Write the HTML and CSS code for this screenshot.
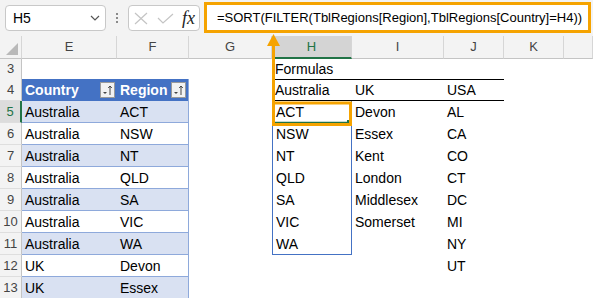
FILE: index.html
```html
<html>
  <head>
    <title>Spill range</title>
    <meta charset="utf-8" />
    <link rel="stylesheet" href="styles.css">
  </head>
  <body>

    <!-- 编辑栏 -->
    <div class="toolbar">
      <div class="namebox">
        <span>H5</span>
        <svg width="10" height="6" viewBox="0 0 10 6"><path d="M1 1 L5 5 L9 1" fill="none" stroke="#555" stroke-width="1.2"/></svg>
      </div>
      <div class="dots"><span></span><span></span><span></span></div>
      <div class="fxbox">
        <svg width="14" height="13" viewBox="0 0 14 13"><path d="M1 1 L13 12 M13 1 L1 12" stroke="#c4c4c4" stroke-width="1.2" fill="none"/></svg>
        <svg width="17" height="11" viewBox="0 0 17 11"><path d="M1 5 L6 10 L16 1" stroke="#c4c4c4" stroke-width="1.2" fill="none"/></svg>
        <span class="fx">fx</span>
      </div>
      <div class="formula">=SORT(FILTER(TblRegions[Region],TblRegions[Country]=H4))</div>
    </div>

    <!-- 工作表 -->
    <div class="sheet">
      <div class="row hdr">
        <div class="corner"><span class="tri"></span></div>
        <div>E</div><div>F</div><div>G</div><div class="on">H</div><div>I</div><div>J</div><div>K</div><div></div>
      </div>

      <div class="row r3">
        <div class="rh">3</div>
        <div></div><div></div><div></div>
        <div class="cell line">Formulas</div><div class="cell line"></div><div class="cell line"></div><div></div><div></div>
      </div>

      <div class="row">
        <div class="rh">4</div>
        <div class="cell th">Country<span class="fbtn"><svg width="13" height="14" viewBox="0 0 13 14"><path d="M2 9 L6 9 L4 11 Z" fill="#444"/><path d="M9 3 L9 12 M7.2 5 L9 3 L10.8 5" stroke="#444" stroke-width="1" fill="none"/></svg></span></div>
        <div class="cell th f">Region<span class="fbtn"><svg width="13" height="14" viewBox="0 0 13 14"><path d="M2 9 L6 9 L4 11 Z" fill="#444"/><path d="M9 3 L9 12 M7.2 5 L9 3 L10.8 5" stroke="#444" stroke-width="1" fill="none"/></svg></span></div>
        <div></div>
        <div class="cell line">Australia</div><div class="cell line">UK</div><div class="cell line">USA</div><div></div><div></div>
      </div>

      <div class="row">
        <div class="rh on">5</div>
        <div class="cell t band">Australia</div><div class="cell t f band">ACT</div><div></div>
        <div class="cell sp">ACT</div><div class="cell">Devon</div><div class="cell">AL</div><div></div><div></div>
      </div>

      <div class="row">
        <div class="rh">6</div>
        <div class="cell t">Australia</div><div class="cell t f">NSW</div><div></div>
        <div class="cell sp">NSW</div><div class="cell">Essex</div><div class="cell">CA</div><div></div><div></div>
      </div>

      <div class="row">
        <div class="rh">7</div>
        <div class="cell t band">Australia</div><div class="cell t f band">NT</div><div></div>
        <div class="cell sp">NT</div><div class="cell">Kent</div><div class="cell">CO</div><div></div><div></div>
      </div>

      <div class="row">
        <div class="rh">8</div>
        <div class="cell t">Australia</div><div class="cell t f">QLD</div><div></div>
        <div class="cell sp">QLD</div><div class="cell">London</div><div class="cell">CT</div><div></div><div></div>
      </div>

      <div class="row">
        <div class="rh">9</div>
        <div class="cell t band">Australia</div><div class="cell t f band">SA</div><div></div>
        <div class="cell sp">SA</div><div class="cell">Middlesex</div><div class="cell">DC</div><div></div><div></div>
      </div>

      <div class="row">
        <div class="rh">10</div>
        <div class="cell t">Australia</div><div class="cell t f">VIC</div><div></div>
        <div class="cell sp">VIC</div><div class="cell">Somerset</div><div class="cell">MI</div><div></div><div></div>
      </div>

      <div class="row">
        <div class="rh">11</div>
        <div class="cell t band">Australia</div><div class="cell t f band">WA</div><div></div>
        <div class="cell sp sp-b">WA</div><div class="cell"></div><div class="cell">NY</div><div></div><div></div>
      </div>

      <div class="row">
        <div class="rh">12</div>
        <div class="cell t">UK</div><div class="cell t f">Devon</div><div></div>
        <div></div><div></div><div class="cell">UT</div><div></div><div></div>
      </div>

      <div class="row">
        <div class="rh">13</div>
        <div class="cell t band">UK</div><div class="cell t f band">Essex</div><div></div>
        <div></div><div></div><div></div><div></div><div></div>
      </div>
    </div>

    <!-- 标注：橙色箭头和框 -->
    <svg class="marks" width="593" height="298" viewBox="0 0 593 298">
      <path d="M275 122.8 L347 122.8" stroke="#217346" stroke-width="2"/>
      <rect x="347" y="120" width="4" height="5" fill="#217346"/>
      <rect x="273.5" y="103" width="77" height="21.5" fill="none" stroke="#f5a300" stroke-width="3"/>
      <path d="M273.5 44 L273.5 103" stroke="#f5a300" stroke-width="3"/>
      <path d="M273.5 34 L267 46 L280 46 Z" fill="#f5a300"/>
    </svg>
  </body>
</html>
```

FILE: styles.css
```css
html, body {
  width: 100%;
  height: 100%;
  margin: 0px;
  overflow: hidden;
  background-color: #fff;
}

body {
  position: relative;
  font-family: "Liberation Sans", Arial, sans-serif;
  color: #000;
}

/* 编辑栏 */
.toolbar {
  display: flex;
  align-items: center;
  height: 36px;
  padding: 0 2px 0 5px;
  box-sizing: border-box;
  background-color: #f3f3f3;
}

.namebox {
  display: flex;
  align-items: center;
  justify-content: space-between;
  width: 101px;
  height: 26px;
  padding: 0 5px 0 7px;
  box-sizing: border-box;
  border: 1px solid #c8c8c8;
  border-radius: 4px;
  background-color: #fff;
  font-size: 14px;
}

.dots {
  display: flex;
  flex-direction: column;
  align-items: center;
  gap: 2px;
  width: 22px;
}

.dots span {
  width: 2px;
  height: 2px;
  background-color: #8a8a8a;
}

.fxbox {
  display: flex;
  align-items: center;
  justify-content: space-between;
  width: 72px;
  height: 26px;
  padding: 0 4px 0 5px;
  box-sizing: border-box;
  border: 1px solid #c8c8c8;
  border-radius: 4px;
  background-color: #fff;
}

.fx {
  font-family: "Liberation Serif", serif;
  font-style: italic;
  font-size: 18px;
  color: #222;
}

.formula {
  display: flex;
  align-items: center;
  flex: 1;
  align-self: flex-start;
  height: 31px;
  margin: 2px 0 0 4px;
  padding-left: 10px;
  box-sizing: border-box;
  border: 3px solid #f5a300;
  background-color: #fff;
  font-size: 13px;
  white-space: nowrap;
}

/* 工作表 */
.row {
  display: grid;
  grid-template-columns: 22px 95px 72px 83px 80px 92px 60px 60px 1fr;
  height: 22px;
}

.row > div {
  box-sizing: border-box;
}

.hdr > div {
  border-right: 1px solid #d6d6d6;
  border-bottom: 1px solid #c4c4c4;
  background-color: #f3f3f3;
  font-size: 13px;
  line-height: 21px;
  text-align: center;
  color: #444;
}

.hdr .on {
  border-bottom: 2px solid #217346;
  background-color: #d4d4d4;
  color: #217346;
}

.corner {
  position: relative;
}

.tri {
  position: absolute;
  right: 3px;
  bottom: 3px;
  width: 0;
  height: 0;
  border-left: 12px solid transparent;
  border-bottom: 12px solid #b9b9b9;
}

.r3 {
  height: 21px;
}

.rh {
  border-right: 1px solid #c4c4c4;
  border-bottom: 1px solid #dedede;
  background-color: #f3f3f3;
  font-size: 13px;
  line-height: 21px;
  text-align: center;
  color: #444;
}

.rh.on {
  border-right: 2px solid #217346;
  background-color: #dcdcdc;
  color: #217346;
}

.cell {
  padding: 0 3px;
  font-size: 14px;
  line-height: 23px;
  white-space: nowrap;
  overflow: hidden;
}

/* 表格 */
.th {
  display: flex;
  align-items: center;
  justify-content: space-between;
  padding-right: 2px;
  background-color: #4472c4;
  color: #fff;
  font-weight: bold;
}

.fbtn {
  display: flex;
  width: 15px;
  height: 16px;
  box-sizing: border-box;
  border: 1px solid #9a9a9a;
  background-color: #f2f2f2;
}

.t {
  border-bottom: 1px solid #8ea9db;
}

.f {
  border-right: 1px solid #8ea9db;
}

.band {
  background-color: #d9e1f2;
}

.line {
  border-bottom: 1px solid #000;
}

.sp {
  border-left: 1px solid #4472c4;
  border-right: 1px solid #4472c4;
}

.sp-b {
  border-bottom: 1px solid #4472c4;
}

/* 标注 */
.marks {
  position: absolute;
  top: 0;
  left: 0;
  pointer-events: none;
}
```
